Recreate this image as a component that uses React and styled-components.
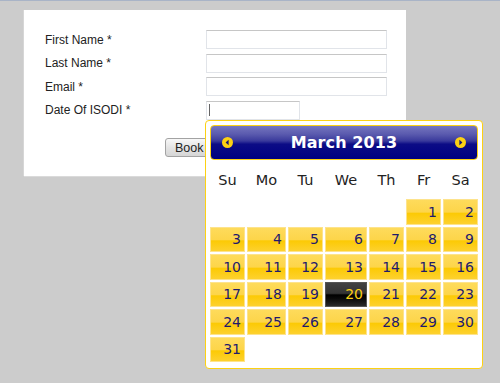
import React from "react";
import styled, { createGlobalStyle } from "styled-components";

const Global = createGlobalStyle`
  html, body { margin: 0; padding: 0; }
  body {
    background: #cccccc;
    border-top: 1px solid #a9b4c7;
    font-family: "Liberation Sans", Arial, sans-serif;
    height: 382px;
    overflow: hidden;
  }
`;

const Page = styled.div`
  position: relative;
  padding: 9px 0 0 24px;
`;

const Panel = styled.div`
  width: 382px;
  height: 166px;
  box-sizing: border-box;
  background: #fff;
  box-shadow: 0 1px 0 #dadada, -1px 0 0 #d6d6d6;
  padding: 20px 0 0 21px;
`;

const Form = styled.div`
  display: grid;
  grid-template-columns: 161px 181px;
  grid-auto-rows: 19px;
  row-gap: 4.5px;
  align-items: center;
`;

const Label = styled.label`
  font-size: 12px;
  color: #222;
  line-height: 14px;
`;

const Input = styled.div`
  box-sizing: border-box;
  width: ${(p) => p.$w || 181}px;
  height: 19px;
  background: #fff;
  border: 1px solid #e1e4e9;
  border-top-color: #c6c6c6;
  display: flex;
  align-items: center;
  padding-left: 2px;
`;

const Caret = styled.span`
  width: 1px;
  height: 12px;
  background: #666;
`;

const ButtonRow = styled.div`
  display: flex;
  justify-content: center;
  margin: 18.5px 0 0 -21px;
`;

const Button = styled.button`
  width: 100px;
  height: 19px;
  box-sizing: border-box;
  border: 1px solid #a3a3a3;
  border-radius: 3px;
  background: linear-gradient(#f8f8f8, #e4e4e4 50%, #d6d6d6);
  font-family: "Liberation Sans", Arial, sans-serif;
  font-size: 12.5px;
  color: #222;
  text-align: left;
  padding: 0 0 0 9px;
  line-height: 16px;
`;

const Calendar = styled.div`
  position: absolute;
  left: 205px;
  top: 119px;
  width: 268px;
  padding: 4px 4px 6px 4px;
  background: #fff;
  border: 1px solid #fcd113;
  border-radius: 4px;
  font-family: "DejaVu Sans", Verdana, sans-serif;
`;

const Header = styled.div`
  box-sizing: border-box;
  height: 35px;
  border: 1px solid #fcd113;
  border-radius: 4px;
  background: linear-gradient(
    #7676bf 0%,
    #5a5aae 25%,
    #3a3a9c 45%,
    #0c0c86 55%,
    #000080 100%
  );
  display: flex;
  align-items: center;
  justify-content: space-between;
  padding: 0 11px 0 11px;
`;

const Title = styled.div`
  color: #fff;
  font-weight: bold;
  font-size: 16px;
  letter-spacing: 0.1px;
`;

const NavIcon = ({ dir }) => (
  <svg width="11" height="11" viewBox="0 0 11 11">
    <circle cx="5.5" cy="5.5" r="5.5" fill="#fcd113" />
    {dir === "prev" ? (
      <polygon points="6.6,2.8 6.6,8.2 3.6,5.5" fill="#1a1a70" />
    ) : (
      <polygon points="4.4,2.8 4.4,8.2 7.4,5.5" fill="#1a1a70" />
    )}
  </svg>
);

const cols = "35px 39px 35px 42px 35px 35px 35px";

const WeekRow = styled.div`
  display: grid;
  grid-template-columns: ${cols};
  column-gap: 2px;
  height: 39px;
  align-items: center;
`;

const WeekDay = styled.div`
  text-align: center;
  font-size: 14.5px;
  color: #222;
`;

const Days = styled.div`
  display: grid;
  grid-template-columns: ${cols};
  column-gap: 2px;
  grid-auto-rows: 25.5px;
  row-gap: 2px;
`;

const Day = styled.div`
  box-sizing: border-box;
  border: 1px solid ${(p) => (p.$active ? "#555" : "#fde38c")};
  background: ${(p) =>
    p.$active
      ? "linear-gradient(#424242 0%, #333 45%, #000 52%, #0a0a0a 68%, #2a2a2a 100%)"
      : "linear-gradient(#fedb5b 0%, #fdd54a 50%, #fcca05 56%, #fdd12e 100%)"};
  color: ${(p) => (p.$active ? "#fcd113" : "#1e1a6c")};
  font-size: 14px;
  text-align: right;
  padding-right: 3px;
  display: flex;
  align-items: center;
  justify-content: flex-end;
`;

const Empty = styled.div``;

const labels = ["First Name *", "Last Name *", "Email *", "Date Of ISODI *"];
const weekdays = ["Su", "Mo", "Tu", "We", "Th", "Fr", "Sa"];

export default function App() {
  const cells = [];
  for (let i = 0; i < 5; i++) cells.push(<Empty key={"e" + i} />);
  for (let d = 1; d <= 31; d++)
    cells.push(
      <Day key={d} $active={d === 20}>
        {d}
      </Day>
    );

  return (
    <>
      <Global />
      <Page>
        <Panel>
          <Form>
            <Label>{labels[0]}</Label>
            <Input />
            <Label>{labels[1]}</Label>
            <Input />
            <Label>{labels[2]}</Label>
            <Input />
            <Label>{labels[3]}</Label>
            <Input $w={94}>
              <Caret />
            </Input>
          </Form>
          <ButtonRow>
            <Button>Book Now</Button>
          </ButtonRow>
        </Panel>
        <Calendar>
          <Header>
            <NavIcon dir="prev" />
            <Title>March 2013</Title>
            <NavIcon dir="next" />
          </Header>
          <WeekRow>
            {weekdays.map((w) => (
              <WeekDay key={w}>{w}</WeekDay>
            ))}
          </WeekRow>
          <Days>{cells}</Days>
        </Calendar>
      </Page>
    </>
  );
}
